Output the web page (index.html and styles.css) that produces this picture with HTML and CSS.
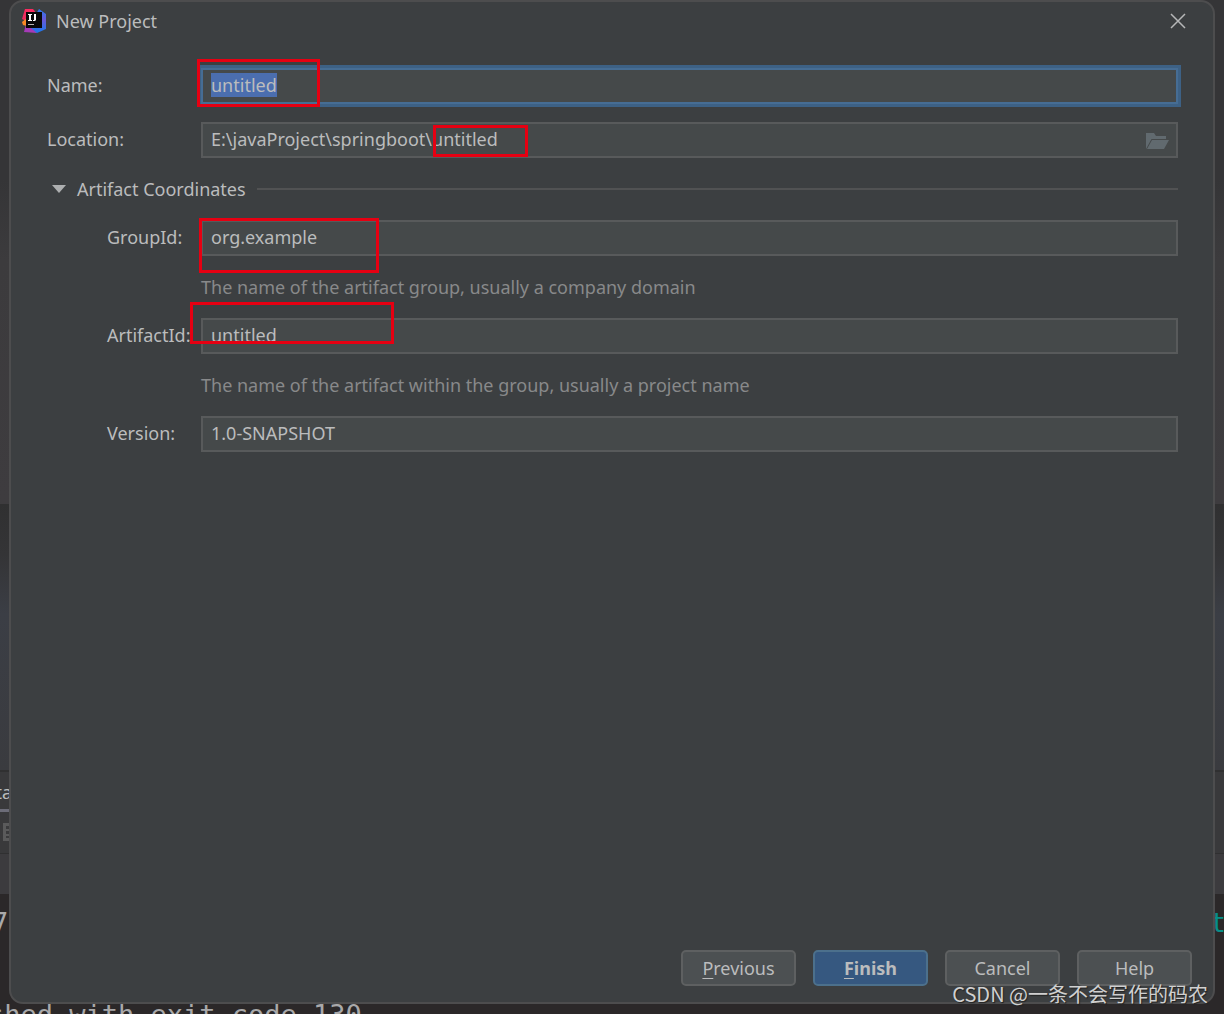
FILE: index.html
```html
<!DOCTYPE html>
<html lang="en">
<head>
<meta charset="utf-8">
<title>New Project</title>
<link rel="stylesheet" href="styles.css">
</head>
<body>
<div class="ide" aria-hidden="true">
  <div class="ide-editor"></div>
  <div class="ide-editor ide-editor-low"></div>
  <div class="ide-tabs"><span class="ide-tab">ta</span></div>
  <div class="ide-tools">
    <svg class="ide-grid" width="12" height="18" viewBox="0 0 12 18"><path fill="#5a5a5b" d="M0 0h12v18H0z"/><path fill="#3a3a3c" d="M3 3h3v3H3zM8 3h4v3H8zM3 8h3v3H3zM8 8h4v3H8zM3 13h3v2H3zM8 13h4v2H8z"/></svg>
  </div>
  <div class="ide-console">
    <span class="log log-start">7</span>
    <span class="log log-end">t</span>
    <span class="log log-exit">shed with exit code 130</span>
  </div>
</div>

<main class="dialog">
  <header class="titlebar">
    <svg class="logo" width="24" height="24" viewBox="0 0 24 24">
      <defs>
        <linearGradient id="blue" x1="0" y1="0" x2="0" y2="1"><stop offset="0" stop-color="#2679ee"/><stop offset=".45" stop-color="#6a58d8"/><stop offset="1" stop-color="#177bf0"/></linearGradient>
        <linearGradient id="pink" x1="0" y1="0" x2="0" y2="1"><stop offset="0" stop-color="#fb2b60"/><stop offset="1" stop-color="#e52d5f"/></linearGradient>
      </defs>
      <path fill="url(#blue)" d="M17 0l7 5v15l-9 4-9-4V5h8z"/>
      <path fill="#a53bb8" d="M4 15l11 9-13-1z"/>
      <path fill="url(#pink)" d="M3 0h8l4 5-9 8-6-3z"/>
      <path fill="#f98a25" d="M0 13l5-4v8l-4-1z"/>
      <path fill="#090909" d="M4 3h16v16H4z"/>
      <path fill="#fff" d="M6 5h4v1H9v5h1v1H6v-1h1V6H6zM12 5h2v6l-1 1h-2v-1h1z"/>
      <path fill="#b5b5b5" d="M6 15h6v1H6z"/>
    </svg>
    <h1 class="title">New Project</h1>
    <button class="close" type="button" aria-label="Close">
      <svg width="16" height="16" viewBox="0 0 16 16"><path d="M1 1l14 14M15 1L1 15" fill="none" stroke="#b6b7b8" stroke-width="1.500"/></svg>
    </button>
  </header>

  <form class="form" id="project">
    <div class="row">
      <label for="name">Name:</label>
      <div class="field">
        <input class="input input-active" id="name" type="text" value="untitled">
        <span class="mark mark-name"></span>
      </div>
    </div>
    <div class="row">
      <label for="location">Location:</label>
      <div class="field">
        <input class="input" id="location" type="text" value="E:\javaProject\springboot\untitled">
        <button class="browse" type="button" aria-label="Browse">
          <svg width="24" height="18" viewBox="0 0 24 18"><path fill="#616a6f" d="M1 17V1h8l2 3h10v3H6.500zM7 8h17l-5 9H2z"/></svg>
        </button>
        <span class="mark mark-location"></span>
      </div>
    </div>

    <h2 class="section">
      <svg width="14" height="8" viewBox="0 0 14 8"><path fill="#adafb0" d="M0 0h14L7 8z"/></svg>
      <span>Artifact Coordinates</span>
    </h2>

    <div class="row row-nested">
      <label for="group">GroupId:</label>
      <div class="field">
        <input class="input" id="group" type="text" value="org.example">
        <span class="mark mark-group"></span>
      </div>
      <p class="hint">The name of the artifact group, usually a company domain</p>
    </div>
    <div class="row row-nested">
      <label for="artifact">ArtifactId:</label>
      <div class="field">
        <input class="input" id="artifact" type="text" value="untitled">
        <span class="mark mark-artifact"></span>
      </div>
      <p class="hint">The name of the artifact within the group, usually a project name</p>
    </div>
    <div class="row row-nested">
      <label for="version">Version:</label>
      <div class="field">
        <input class="input" id="version" type="text" value="1.0-SNAPSHOT">
      </div>
    </div>
  </form>

  <footer class="actions">
    <button class="button" type="button"><u>P</u>revious</button>
    <button class="button button-primary" type="submit" form="project"><u>F</u>inish</button>
    <button class="button" type="button">Cancel</button>
    <button class="button" type="button">Help</button>
  </footer>
</main>
<div class="watermark">CSDN @一条不会写作的码农</div>
<script>
  const nameInput = document.getElementById("name");
  nameInput.focus();
  nameInput.select();
</script>
</body>
</html>
```
FILE: styles.css
```css
* { box-sizing: border-box; }

body {
  margin: 0;
  min-height: 100vh;
  position: relative;
  overflow: hidden;
  background: #2b2829;
  color: #bbbcbd;
  font: 18px/26px "Noto Sans", "Open Sans", sans-serif;
}

/* IDE window behind the dialog */
.ide {
  position: absolute;
  inset: 0;
  display: flex;
  flex-direction: column;
  overflow: hidden;
  background: #39393b;
}
.ide-editor {
  flex: 0 0 504px;
  background: linear-gradient(#353537 0, #353537 180px, #3c3b3d 260px, #3e3c3f 504px);
}
.ide-editor-low {
  flex: 0 0 268px;
  border-bottom: 2px solid #303031;
  background: linear-gradient(#303031 0, #343436 50px, #3b3e45 110px, #3a3b3f 268px);
}
.ide-tabs {
  flex: 0 0 40px;
}
.ide-tab {
  display: block;
  width: 12px;
  height: 40px;
  border-bottom: 3px solid #6c6c78;
  direction: rtl;
  line-height: 40px;
}
.ide-tools {
  flex: 0 0 82px;
  padding: 11px 3px;
  background: linear-gradient(#39393b 41px, #303031 41px, #303031 42px, #3c3b3e 42px);
}
.ide-grid { display: block; }
.ide-console {
  flex: 1;
  position: relative;
  background: #2b2829;
  color: #a9a9aa;
  font: 27px/26px "DejaVu Sans Mono", monospace;
}
.log { position: absolute; white-space: pre; }
.log-start { left: -8px; top: 16px; }
.log-end { right: -2px; top: 16px; color: #078f88; }
.log-exit { left: -12px; top: 108px; }

/* Dialog */
.dialog {
  position: relative;
  display: flex;
  flex-direction: column;
  min-height: calc(100vh - 10px);
  margin: 0 9px 10px;
  border: 2px solid #4d4d4e;
  border-radius: 14px;
  background: #3c3f41;
}
.titlebar {
  display: flex;
  align-items: center;
  gap: 10px;
  height: 38px;
  padding: 0 27px 0 11px;
}
.title {
  flex: 1;
  margin: 0;
  font-size: 18px;
  font-weight: 400;
}
.close,
.browse {
  display: flex;
  padding: 0;
  border: 0;
  background: none;
}
.form {
  display: flex;
  flex: 1;
  flex-direction: column;
  gap: 18px;
  padding: 28px 35px 18px 36px;
}
.row {
  display: grid;
  grid-template-columns: 154px 1fr;
  row-gap: 18px;
  align-items: center;
}
.row label { padding-bottom: 2px; }
.row-nested {
  grid-template-columns: 94px 1fr;
  padding-left: 60px;
}
.field { position: relative; display: flex; }
.input {
  width: 100%;
  height: 36px;
  padding: 0 8px 2px;
  border: 2px solid #585a5b;
  outline: 0;
  background: #45494a;
  color: #bbbcbd;
  font: inherit;
}
.input-active {
  border-color: #466d94;
  box-shadow: 0 0 0 3px #3d6185;
}
.input::selection { background: #4b6eaf; color: #bbbcbd; }
.browse { position: absolute; right: 9px; top: 10px; }
.hint { grid-column: 2; margin: 0; color: #88898a; }
.section {
  display: flex;
  align-items: center;
  gap: 11px;
  margin: 0;
  padding-left: 5px;
  font-size: 18px;
  font-weight: 400;
}
.section::after {
  content: "";
  flex: 1;
  height: 2px;
  background: #515253;
}

/* Red review boxes drawn over the fields */
.mark {
  position: absolute;
  border: 3px solid #e60012;
  pointer-events: none;
}
.mark-name { left: -4px; top: -9px; width: 123px; height: 48px; }
.mark-location { left: 232px; top: 3px; width: 95px; height: 32px; }
.mark-group { left: -2px; top: -2px; width: 180px; height: 55px; }
.mark-artifact { left: -11px; top: -16px; width: 204px; height: 42px; }

.actions {
  display: flex;
  justify-content: flex-end;
  gap: 17px;
  padding: 0 21px 16px;
}
.button {
  width: 115px;
  height: 36px;
  padding: 0;
  border: 2px solid #5e6061;
  border-radius: 5px;
  background: #4c5052;
  color: #bbbcbd;
  font: inherit;
}
.button-primary {
  border-color: #4c708c;
  background: #365880;
  font-weight: 700;
}
.button u { text-underline-offset: 3px; }

.watermark {
  position: absolute;
  right: 16px;
  bottom: 7px;
  color: #d0d0d0;
  font: 20px/26px "Noto Sans CJK SC", sans-serif;
  text-shadow: 1px 1px 1px #222;
}
```
